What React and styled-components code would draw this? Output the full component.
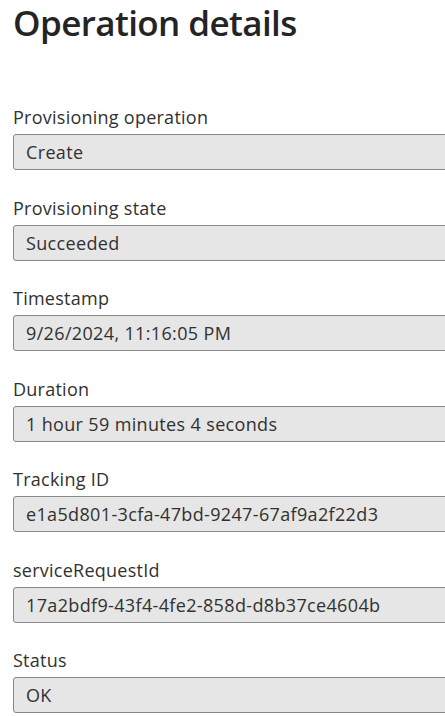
import React from 'react';
import styled, { createGlobalStyle } from 'styled-components';

const GlobalStyle = createGlobalStyle`
  html, body {
    margin: 0;
    padding: 0;
    background: #ffffff;
    overflow: hidden;
  }
  body {
    font-family: "Open Sans", "Noto Sans", sans-serif;
    color: #242424;
  }
`;

const Page = styled.div`
  padding: 0 0 0 13px;
  width: 700px;
`;

const Title = styled.h1`
  margin: 0;
  font-size: 35px;
  line-height: 46px;
  font-weight: 600;
  color: #242424;
  letter-spacing: -0.6px;
`;

const Fields = styled.div`
  display: flex;
  flex-direction: column;
  gap: 26.5px;
  margin-top: 60px;
`;

const Field = styled.div`
  display: flex;
  flex-direction: column;
`;

const Label = styled.div`
  font-size: 18px;
  line-height: 22px;
  letter-spacing: 0.25px;
  color: #323130;
  margin-bottom: 6px;
`;

const ValueBox = styled.div`
  box-sizing: border-box;
  width: 560px;
  height: 36px;
  border: 1px solid #8a8886;
  border-radius: 3px;
  background: #e6e6e6;
  padding: 0 12px;
  display: flex;
  align-items: center;
  font-size: 18px;
  letter-spacing: 0.35px;
  color: #323130;
`;

const details = [
  { label: 'Provisioning operation', value: 'Create' },
  { label: 'Provisioning state', value: 'Succeeded' },
  { label: 'Timestamp', value: '9/26/2024, 11:16:05 PM' },
  { label: 'Duration', value: '1 hour 59 minutes 4 seconds' },
  { label: 'Tracking ID', value: 'e1a5d801-3cfa-47bd-9247-67af9a2f22d3' },
  { label: 'serviceRequestId', value: '17a2bdf9-43f4-4fe2-858d-d8b37ce4604b' },
  { label: 'Status', value: 'OK' }
];

export default function App() {
  return (
    <>
      <GlobalStyle />
      <Page>
        <Title>Operation details</Title>
        <Fields>
          {details.map(d => (
            <Field key={d.label}>
              <Label>{d.label}</Label>
              <ValueBox>{d.value}</ValueBox>
            </Field>
          ))}
        </Fields>
      </Page>
    </>
  );
}
